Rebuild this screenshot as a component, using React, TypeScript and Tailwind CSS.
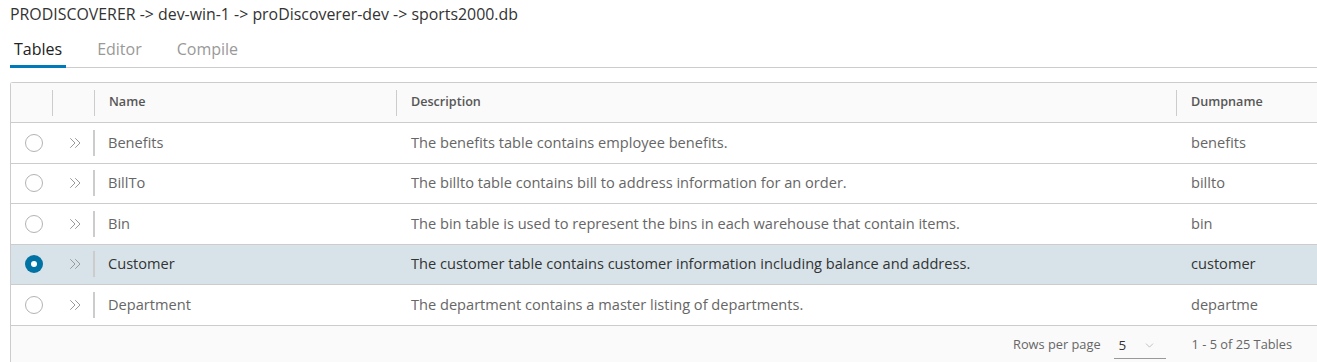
import { ChevronDown } from 'lucide-react';

const rows = [
  { name: 'Benefits', desc: 'The benefits table contains employee benefits.', dump: 'benefits' },
  { name: 'BillTo', desc: 'The billto table contains bill to address information for an order.', dump: 'billto' },
  { name: 'Bin', desc: 'The bin table is used to represent the bins in each warehouse that contain items.', dump: 'bin' },
  { name: 'Customer', desc: 'The customer table contains customer information including balance and address.', dump: 'customer' },
  { name: 'Department', desc: 'The department contains a master listing of departments.', dump: 'departme' },
];

const selected = 'Customer';

function Radio({ checked }: { checked: boolean }) {
  if (checked) {
    return (
      <span className="w-[18px] h-[18px] rounded-full bg-[#0072a3] flex items-center justify-center">
        <span className="w-[6px] h-[6px] rounded-full bg-white" />
      </span>
    );
  }
  return <span className="w-[18px] h-[18px] rounded-full border border-[#b3b3b3] bg-white" />;
}

function DoubleChevron() {
  return (
    <svg width="13" height="12" viewBox="0 0 13 12" fill="none" stroke="#9a9a9a" strokeWidth="1" strokeLinecap="round" strokeLinejoin="round">
      <path d="M1.5 1.5 L6 6 L1.5 10.5" />
      <path d="M6.5 1.5 L11 6 L6.5 10.5" />
    </svg>
  );
}

export default function App() {
  return (
    <div className="w-[1317px] h-[362px] overflow-hidden bg-white text-[#565656]" style={{ fontFamily: '"Open Sans", Lato, sans-serif' }}>
      <div className="pl-[10px] pt-[4px] text-[15.9px] leading-[20px] text-[#333]">
        PRODISCOVERER -&gt; dev-win-1 -&gt; proDiscoverer-dev -&gt; sports2000.db
      </div>

      <div className="ml-[10px] mt-[14px] flex items-stretch border-b border-[#ccc] h-[30px]">
        <div className="px-[4px] text-[16px] leading-[22px] text-[#222] border-b-[3px] border-[#0079b8] -mb-px">Tables</div>
        <div className="ml-[31px] text-[16px] leading-[22px] text-[#999]">Editor</div>
        <div className="ml-[35px] text-[16px] leading-[22px] text-[#999]">Compile</div>
      </div>

      <div className="ml-[10px] mt-[14px] w-[1340px] border-l border-t border-[#ccc] rounded-tl-[3px]">
        <div className="flex h-[40px] bg-[#fafafa] border-b border-[#ccc] text-[12.6px] font-semibold text-[#565656]">
          <div className="w-[42px] flex items-center justify-end">
            <span className="w-px h-[26px] bg-[#ccc]" />
          </div>
          <div className="w-[42px] flex items-center justify-end">
            <span className="w-px h-[26px] bg-[#ccc]" />
          </div>
          <div className="w-[302px] flex items-center justify-between pl-[14px]">
            <span>Name</span>
            <span className="w-px h-[26px] bg-[#ccc]" />
          </div>
          <div className="w-[780px] flex items-center justify-between pl-[14px]">
            <span>Description</span>
            <span className="w-px h-[26px] bg-[#ccc]" />
          </div>
          <div className="flex-1 flex items-center pl-[14px]">
            <span>Dumpname</span>
          </div>
        </div>

        {rows.map((r) => {
          const isSel = r.name === selected;
          return (
            <div
              key={r.name}
              className={`flex h-[40.5px] border-b border-[#ccc] text-[14.6px] ${isSel ? 'bg-[#d8e3e9] text-[#333]' : 'bg-white text-[#666]'}`}
            >
              <div className="w-[42px] flex items-center justify-center pl-[4px]">
                <Radio checked={isSel} />
              </div>
              <div className="w-[42px] flex items-center justify-between pl-[16px]">
                <DoubleChevron />
                <span className="w-[2px] h-[26px] bg-[#ccc]" />
              </div>
              <div className="w-[302px] flex items-center pl-[13px]">{r.name}</div>
              <div className="w-[780px] flex items-center pl-[14px]">{r.desc}</div>
              <div className="flex-1 flex items-center pl-[14px]">{r.dump}</div>
            </div>
          );
        })}

        <div className="h-[38px] bg-[#fafafa] flex items-center text-[12.8px] text-[#666]">
          <div className="w-[1002px]" />
          <span>Rows per page</span>
          <div className="ml-[13px] w-[52px] h-[26px] border-b border-[#999] flex items-center justify-between pl-[5px] pr-[10px] mt-[2px]">
            <span className="text-[13.5px] text-[#333]">5</span>
            <ChevronDown className="w-[13px] h-[13px] text-[#aaa]" strokeWidth={1.3} />
          </div>
          <span className="ml-[26px]">1 - 5 of 25 Tables</span>
        </div>
      </div>
    </div>
  );
}
